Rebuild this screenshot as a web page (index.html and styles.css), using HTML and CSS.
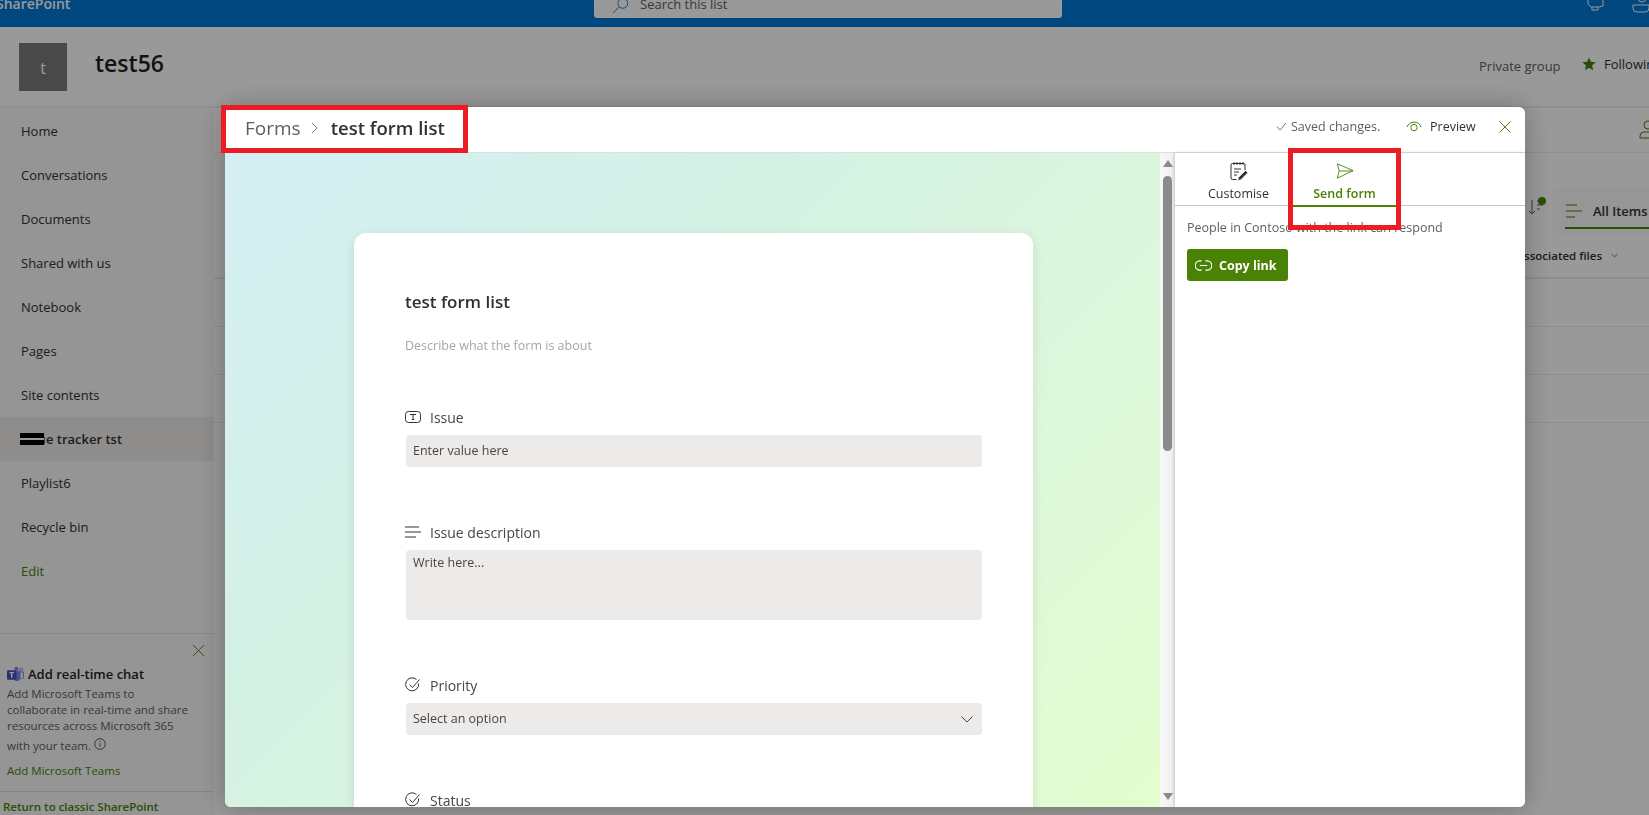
FILE: index.html
```html
<!DOCTYPE html>
<html lang="en">
<head>
<meta charset="utf-8">
<title>test56 - Forms</title>
<link rel="stylesheet" href="styles.css">
</head>
<body>
<div class="page">
  <header class="topbar">
    <div class="brand">SharePoint</div>
    <div class="search">
      <svg class="search-icon" viewBox="0 0 20 20"><circle cx="12" cy="7" r="5.5"/><path d="M8 11l-7 7"/></svg>
      <span>Search this list</span>
    </div>
    <div class="top-icons">
      <svg viewBox="0 0 20 20"><path d="M2 3l15-2v11l-4 1H5L2 10zM6 13v3h6v-3"/></svg>
      <svg viewBox="0 0 20 20"><circle cx="11" cy="4" r="4"/><path d="M2 11h16v3a4 4 0 0 1-4 4H6a4 4 0 0 1-4-4z"/></svg>
    </div>
  </header>

  <div class="site-header">
    <div class="site-logo">t</div>
    <div class="site-title">test56</div>
    <div class="site-meta">
      <span class="private">Private group</span>
      <svg class="star" viewBox="0 0 16 16"><path d="M8 .5l2.2 5 5.3.5-4 3.6 1.2 5.4L8 12.2 3.3 15l1.2-5.4-4-3.6 5.3-.5z"/></svg>
      <span class="following">Following</span>
    </div>
  </div>

  <div class="body-row">
    <aside class="sidebar">
      <nav class="nav">
        <a class="nav-item">Home</a>
        <a class="nav-item">Conversations</a>
        <a class="nav-item">Documents</a>
        <a class="nav-item">Shared with us</a>
        <a class="nav-item">Notebook</a>
        <a class="nav-item">Pages</a>
        <a class="nav-item">Site contents</a>
        <a class="nav-item nav-selected"><span class="redact"></span>Issue tracker tst</a>
        <a class="nav-item">Playlist6</a>
        <a class="nav-item">Recycle bin</a>
        <a class="nav-item nav-edit">Edit</a>
      </nav>
      <section class="promo">
        <div class="promo-close">
          <svg viewBox="0 0 14 14"><path d="M1 1l12 12M13 1L1 13"/></svg>
        </div>
        <div class="promo-title">
          <svg class="teams" viewBox="0 0 18 16">
            <circle cx="10" cy="2.6" r="2.2" fill="#7b83eb"/>
            <circle cx="15" cy="3.6" r="1.7" fill="none" stroke="#7b83eb"/>
            <path d="M7 5h7v7a3.5 3.5 0 0 1-7 0z" fill="#7b83eb"/>
            <path d="M13.5 6h4v5a2 2 0 0 1-4 0z" fill="none" stroke="#7b83eb"/>
            <rect x="0" y="4" width="10" height="10" rx="1" fill="#4b53bc"/>
            <path d="M2.5 6.5h5M5 6.5v5.5" stroke="#fff" stroke-width="1.5"/>
          </svg>
          <span>Add real-time chat</span>
        </div>
        <p class="promo-text">Add Microsoft Teams to collaborate in real-time and share resources across Microsoft 365</p>
        <p class="promo-last">with your team.
          <svg class="info" viewBox="0 0 12 12"><circle cx="6" cy="6" r="5.3"/><path d="M6 5.2v3.6M6 3v1.1"/></svg>
        </p>
        <a class="promo-link">Add Microsoft Teams</a>
      </section>
      <a class="classic">Return to classic SharePoint</a>
    </aside>

    <main class="main">
      <div class="cmd-row">
        <svg class="person" viewBox="0 0 20 20"><circle cx="10" cy="5" r="4"/><path d="M2 18v-2a4 4 0 0 1 4-4h8a4 4 0 0 1 4 4v2z"/></svg>
      </div>
      <div class="view-row">
        <div class="sort">
          <svg viewBox="0 0 18 18"><path d="M5 2v14M2 13l3 3 3-3M10 3h8M10 7h6M10 11h3"/></svg>
          <i class="dot"></i>
        </div>
        <div class="view-tab">
          <svg viewBox="0 0 17 14"><path d="M1 1h11M1 7h16M1 13h9"/></svg>
          <span>All Items</span>
        </div>
      </div>
      <div class="col-row">
        <span>Associated files</span>
        <svg viewBox="0 0 10 6"><path d="M1 1l4 4 4-4"/></svg>
      </div>
      <div class="list-row list-first"></div>
      <div class="list-row"></div>
      <div class="list-row"></div>
    </main>
  </div>
</div>

<div class="scrim"></div>

<div class="modal">
  <div class="modal-head">
    <div class="crumbs">
      <span class="crumb-root">Forms</span>
      <svg class="crumb-sep" viewBox="0 0 8 12"><path d="M1 1l5 5-5 5"/></svg>
      <span class="crumb-leaf">test form list</span>
    </div>
    <div class="modal-actions">
      <svg class="saved-check" viewBox="0 0 12 10"><path d="M1 5l3.5 4L11 1"/></svg>
      <span class="saved">Saved changes.</span>
      <svg class="eye" viewBox="0 0 16 11"><path d="M1 6c2-6.5 12-6.500 14 0"/><circle cx="8" cy="6.500" r="3.200"/></svg>
      <span class="preview">Preview</span>
      <svg class="modal-close" viewBox="0 0 12 12"><path d="M.5.500l11 11M11.500.500l-11 11"/></svg>
    </div>
  </div>
  <div class="modal-body">
    <div class="canvas">
      <div class="card">
        <h1 class="form-title">test form list</h1>
        <p class="form-desc">Describe what the form is about</p>

        <div class="field">
          <label class="field-label">
            <svg class="field-icon" viewBox="0 0 16 12"><rect x=".5" y=".5" width="15" height="11" rx="3"/><path d="M5 3.500h6M8 3.500v5M6.800 8.500h2.400"/></svg>
            Issue
          </label>
          <div class="control">Enter value here</div>
        </div>

        <div class="field">
          <label class="field-label">
            <svg class="field-icon" viewBox="0 0 16 12"><path d="M0 1h14M0 6h16M0 11h11"/></svg>
            Issue description
          </label>
          <div class="control control-area">Write here...</div>
        </div>

        <div class="field">
          <label class="field-label">
            <svg class="field-icon" viewBox="0 0 16 16"><path d="M13.600 6.500A6.500 6.500 0 1 1 11.500 2.500"/><path d="M4.500 7.500l3 3L14.500 2.500"/></svg>
            Priority
          </label>
          <div class="control control-select">
            <span>Select an option</span>
            <svg viewBox="0 0 12 7"><path d="M.5.500L6 6 11.500.500"/></svg>
          </div>
        </div>

        <div class="field">
          <label class="field-label">
            <svg class="field-icon" viewBox="0 0 16 16"><path d="M13.600 6.500A6.500 6.500 0 1 1 11.500 2.500"/><path d="M4.500 7.500l3 3L14.500 2.500"/></svg>
            Status
          </label>
        </div>
      </div>
    </div>

    <div class="scrollbar">
      <i class="arrow-up"></i>
      <div class="track"><div class="thumb"></div></div>
      <i class="arrow-down"></i>
    </div>

    <div class="panel">
      <div class="tabs">
        <div class="tab">
          <svg class="tab-icon" viewBox="0 0 18 20">
            <path class="ink" d="M2.500 2.500h11a1.500 1.500 0 0 1 1.500 1.500v5M2.500 2.500A1.500 1.500 0 0 0 1 4v13a1.500 1.500 0 0 0 1.500 1.500h4"/>
            <path class="ink" d="M4 1v3M7 1v3M10 1v3M13 1v3M4 8h7M4 11h5M4 14h3"/>
            <path class="fill" d="M15.500 9.500l2.300 2.300-7 7-3 .7.700-3z"/>
          </svg>
          <span>Customise</span>
        </div>
        <div class="tab tab-active">
          <svg class="tab-icon" viewBox="0 0 20 18"><path d="M1.500 1L19 8.500 1.500 17 3.500 9zM3.500 9H19"/></svg>
          <span>Send form</span>
        </div>
      </div>
      <p class="panel-note">People in Contoso with the link can respond</p>
      <button class="copy-btn">
        <svg viewBox="0 0 18 12"><path d="M7 1H5a5 5 0 0 0 0 10h2M11 1h2a5 5 0 0 1 0 10h-2M5 6h8"/></svg>
        <span>Copy link</span>
      </button>
    </div>
  </div>
</div>

<div class="mark mark-crumbs"></div>
<div class="mark mark-send"></div>
</body>
</html>
```

FILE: styles.css
```css
* { box-sizing: border-box; }

html, body {
  margin: 0;
  height: 100%;
  overflow: hidden;
  background: #fff;
  font-family: "Open Sans", "Noto Sans", "Liberation Sans", sans-serif;
  color: #323130;
}

svg { display: block; fill: none; stroke: currentColor; }
p, h1 { margin: 0; }

.page {
  height: 815px;
  display: flex;
  flex-direction: column;
  overflow: hidden;
}

/* top bar */
.topbar {
  flex: 0 0 27px;
  background: #0078d4;
  position: relative;
  display: flex;
  align-items: flex-start;
  overflow: hidden;
  color: #fff;
}
.brand {
  width: 594px;
  margin-top: -6px;
  margin-left: -4px;
  font-size: 14px;
  font-weight: 600;
  line-height: 20px;
  flex: none;
}
.search {
  width: 468px;
  height: 18px;
  background: #fff;
  border-radius: 0 0 3px 3px;
  display: flex;
  align-items: center;
  color: #605e5c;
  font-size: 13px;
  padding-left: 18px;
  gap: 10px;
  margin-left: 4px;
}
.search-icon { width: 18px; height: 18px; color: #0078d4; margin-top: -6px; }
.search span { margin-top: -10px; }
.top-icons {
  margin-left: auto;
  display: flex;
  gap: 25px;
  margin-top: -6px;
  padding-right: 0;
  margin-right: -2px;
}
.top-icons svg { width: 20px; height: 20px; }

/* site header */
.site-header {
  flex: 0 0 81px;
  display: flex;
  align-items: center;
  border-bottom: 2px solid #eee;
  padding-left: 19px;
  background: #fff;
}
.site-logo {
  width: 48px;
  height: 48px;
  background: #7a7a7a;
  color: #fff;
  font-size: 16px;
  display: flex;
  align-items: center;
  justify-content: center;
  padding-top: 2px;
}
.site-title {
  margin-left: 28px;
  font-size: 23px;
  font-weight: 600;
  margin-top: -8px;
  color: #201f1e;
}
.site-meta {
  margin-left: auto;
  display: flex;
  align-items: center;
  white-space: nowrap;
  width: 170px;
  flex: none;
  overflow: hidden;
  font-size: 13px;
  margin-top: -2px;
}
.private { color: #605e5c; width: 103px; flex: none; }
.star { width: 14px; height: 14px; fill: #498205; stroke: none; margin-top: -4px; flex: none; }
.following { margin-left: 8px; margin-top: -3px; }

/* body */
.body-row { flex: 1; display: flex; min-height: 0; }

.sidebar {
  flex: 0 0 214px;
  background: #f8f8f8;
  display: flex;
  flex-direction: column;
  height: 707px;
  padding-top: 1px;
}
.nav { display: flex; flex-direction: column; }
.nav-item {
  height: 44px;
  flex: none;
  padding-left: 21px;
  font-size: 13px;
  line-height: 44px;
  color: #323130;
  position: relative;
}
.nav-selected { background: #edebe9; font-weight: 600; }
.nav-edit { color: #498205; }
.redact {
  position: absolute;
  left: 20px;
  top: 16px;
  width: 24px;
  height: 12px;
  background: #000;
  border-top: 5px solid #000;
  border-bottom: 5px solid #000;
  background-clip: padding-box;
  background-color: #fff;
}

.promo {
  margin-top: 40px;
  height: 158px;
  flex: none;
  border-top: 1px solid #e1dfdd;
  padding: 10px 7px 0;
}
.promo-close { display: flex; justify-content: flex-end; padding-right: 2px; color: #498205; height: 20px; }
.promo-close svg { width: 13px; height: 13px; }
.promo-title {
  display: flex;
  align-items: center;
  gap: 4px;
  font-size: 13px;
  font-weight: 600;
  color: #201f1e;
  line-height: 20px;
}
.teams { width: 17px; height: 16px; stroke: none; flex: none; }
.promo-text {
  font-size: 11.500px;
  line-height: 16px;
  color: #605e5c;
  margin-top: 2px;
  width: 190px;
}
.promo-last {
  font-size: 11.500px;
  line-height: 20px;
  color: #605e5c;
  display: flex;
  align-items: center;
  gap: 3px;
  margin-top: 2px;
}
.info { width: 12px; height: 12px; margin-top: -4px; }
.promo-link {
  display: block;
  font-size: 11.500px;
  color: #498205;
  line-height: 18px;
  margin-top: 6px;
}
.classic {
  border-top: 1px solid #e1dfdd;
  padding: 6px 0 0 3px;
  font-size: 11.500px;
  font-weight: 600;
  color: #498205;
  white-space: nowrap;
  line-height: 18px;
}

/* list behind the dialog */
.main { flex: 1; min-width: 0; background: #fff; }
.cmd-row {
  height: 45px;
  border-bottom: 1px solid #edebe9;
  display: flex;
  justify-content: flex-end;
  align-items: center;
  color: #498205;
  overflow: hidden;
}
.person { width: 20px; height: 20px; margin-right: -9px; margin-top: 0; }
.view-row {
  margin-top: 34px;
  height: 47px;
  display: flex;
  justify-content: flex-end;
  margin-right: -10px;
}
.sort { position: relative; width: 20px; margin-right: 5px; padding-top: 11px; color: #605e5c; }
.sort svg { width: 18px; height: 18px; }
.dot {
  position: absolute;
  right: 1px;
  top: 10px;
  width: 8px;
  height: 8px;
  border-radius: 50%;
  background: #498205;
}
.view-tab {
  width: 107px;
  background: #fafafa;
  border-radius: 8px;
  padding: 0 0 0 13px;
  display: flex;
  align-items: center;
  gap: 11px;
  font-size: 13px;
  font-weight: 600;
  position: relative;
  white-space: nowrap;
}
.view-tab svg { width: 17px; height: 14px; color: #498205; flex: none; }
.view-tab::after {
  content: "";
  position: absolute;
  left: 13px;
  right: 0;
  bottom: 5px;
  height: 2px;
  background: #498205;
}
.col-row {
  height: 45px;
  border-bottom: 2px solid #edebe9;
  display: flex;
  justify-content: flex-end;
  align-items: center;
  gap: 9px;
  padding: 0 31px 0 0;
  font-size: 11.500px;
  font-weight: 600;
  color: #323130;
}
.col-row svg { width: 7px; height: 5px; }
.list-row { height: 48px; border-bottom: 1px solid #edebe9; }

/* scrim and dialog */
.scrim { position: fixed; inset: 0; background: rgba(0, 0, 0, .4); }

.modal {
  position: fixed;
  left: 225px;
  top: 107px;
  width: 1300px;
  height: 700px;
  background: #fff;
  border-radius: 6px;
  box-shadow: 0 0 28px rgba(0, 0, 0, .28);
  display: flex;
  flex-direction: column;
  overflow: hidden;
}
.modal-head {
  flex: 0 0 46px;
  border-bottom: 1px solid #e1dfdd;
  display: flex;
  align-items: center;
  justify-content: space-between;
  padding: 0 14px 0 20px;
}
.crumbs { display: flex; align-items: center; font-size: 19px; line-height: 26px; margin-top: -3px; }
.crumb-root { color: #605e5c; }
.crumb-sep { width: 8px; height: 12px; margin: 0 12px 0 10px; color: #777; }
.crumb-leaf { font-weight: 600; color: #323130; font-size: 18.500px; }
.modal-actions { display: flex; align-items: center; font-size: 12.500px; color: #323130; margin-top: -6px; }
.saved-check { width: 11px; height: 9px; color: #666; margin-right: 4px; }
.saved { color: #605e5c; width: 115px; flex: none; white-space: nowrap; }
.eye { width: 16px; height: 11px; color: #498205; margin-right: 8px; }
.preview { width: 69px; flex: none; }
.modal-close { width: 12px; height: 12px; color: #498205; }

.modal-body { flex: 1; display: flex; min-height: 0; }

.canvas {
  flex: 0 0 935px;
  padding: 80px 0 0 129px;
  overflow: hidden;
  background: linear-gradient(135deg, #d5eff4 0%, #d4f1e5 35%, #dcf7dc 65%, #e3fdcf 100%);
}
.card {
  width: 679px;
  height: 700px;
  background: #fff;
  border-radius: 12px;
  box-shadow: 0 3px 12px rgba(0, 0, 0, .1);
  padding: 55px 51px 0;
}
.form-title {
  font-size: 17px;
  font-weight: 600;
  line-height: 28px;
  color: #323130;
}
.form-desc {
  margin-top: 18px;
  font-size: 12.500px;
  line-height: 24px;
  color: #a6a6a6;
  margin-bottom: 47px;
}
.field { margin-bottom: 53px; }
.field-label {
  display: flex;
  align-items: center;
  gap: 9px;
  height: 24px;
  margin-bottom: 6px;
  font-size: 14px;
  color: #484644;
}
.field-icon { width: 16px; height: 16px; color: #323130; stroke-width: 1; flex: none; }
.control {
  margin-left: 1px;
  height: 32px;
  background: #edebe9;
  border-radius: 4px;
  padding: 0 7px;
  font-size: 12.500px;
  line-height: 32px;
  color: #484644;
}
.control-area { height: 70px; line-height: 26px; }
.control-select {
  display: flex;
  align-items: center;
  justify-content: space-between;
  padding-right: 9px;
}
.control-select svg { width: 12px; height: 7px; }

.scrollbar {
  flex: 0 0 15px;
  background: linear-gradient(90deg, #f8f8f8, #eee);
  display: flex;
  flex-direction: column;
  align-items: center;
  padding: 7px 0;
}
.arrow-up, .arrow-down {
  width: 0;
  height: 0;
  flex: none;
  border-left: 5px solid transparent;
  border-right: 5px solid transparent;
}
.arrow-up { border-bottom: 7px solid #8a8a8a; }
.arrow-down { border-top: 7px solid #8a8a8a; }
.track { flex: 1; width: 9px; padding-top: 9px; }
.thumb { height: 275px; background: #8a8a8a; border-radius: 5px; }

.panel {
  flex: 1;
  min-width: 0;
  background: #fff;
  box-shadow: -1px 0 3px rgba(0, 0, 0, .18);
  position: relative;
}
.tabs {
  height: 53px;
  border-bottom: 1px solid #c8c6c4;
  padding-left: 12px;
  display: flex;
  gap: 3px;
}
.tab {
  width: 103px;
  display: flex;
  flex-direction: column;
  align-items: center;
  font-size: 12.500px;
  color: #323130;
  padding-top: 8px;
}
.tab span { margin-top: 3px; line-height: 20px; white-space: nowrap; }
.tab-icon { width: 18px; height: 20px; stroke-width: 1; }
.tab-icon .fill { fill: #323130; stroke: #fff; stroke-width: .6; }
.tab-active {
  color: #498205;
  font-weight: 600;
  height: 54px;
  border-bottom: 2px solid #498205;
}
.panel-note {
  margin: 12px 0 0 12px;
  font-size: 12.500px;
  line-height: 20px;
  color: #605e5c;
  white-space: nowrap;
}
.copy-btn {
  margin: 11px 0 0 12px;
  width: 101px;
  height: 32px;
  background: #498205;
  color: #fff;
  border: 0;
  border-radius: 3px;
  padding: 0 0 0 8px;
  display: flex;
  align-items: center;
  gap: 7px;
  font-family: inherit;
  font-size: 12.500px;
  font-weight: 700;
  white-space: nowrap;
}
.copy-btn svg { width: 17px; height: 11px; flex: none; stroke-width: 1.300; }

/* red annotations drawn on top of the screenshot */
.mark { position: fixed; border: 5px solid #ed1c24; }
.mark-crumbs { left: 221px; top: 105px; width: 247px; height: 48px; }
.mark-send { left: 1288px; top: 148px; width: 113px; height: 82px; }
```
